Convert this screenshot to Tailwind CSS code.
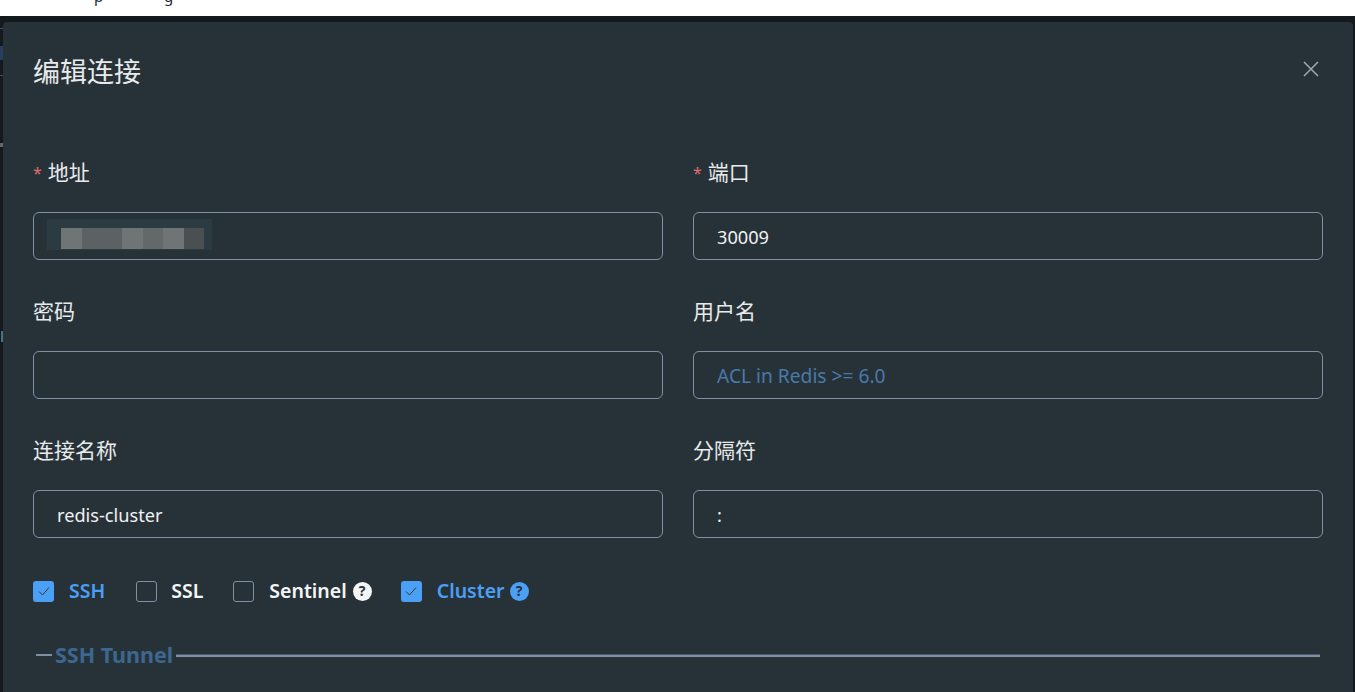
<!doctype html>
<html>
<head>
<meta charset="utf-8">
<script src="https://cdn.jsdelivr.net/npm/@tailwindcss/browser@4"></script>
</head>
<body class="relative w-[1355px] h-[692px] overflow-hidden bg-[#14191d] font-['Noto_Sans','Noto_Sans_CJK_SC',sans-serif]">
<div class="h-4 bg-white overflow-hidden relative text-[15px] leading-none text-[#1f2937]">
  <span class="absolute left-[94px] top-[-11px]">p</span>
  <span class="absolute left-[164px] top-[-11px]">g</span>
</div>
<div class="absolute left-0 top-[28px] w-[3px] h-px bg-[#4a5054]"></div>
<div class="absolute left-0 top-[46px] w-[3px] h-[14px] bg-[#24405e]"></div>
<div class="absolute left-0 top-[75px] w-[3px] h-px bg-[#4a5054]"></div>
<div class="absolute left-0 top-[143px] w-[3px] h-[4px] bg-[#6a6460]"></div>
<div class="absolute left-[1px] top-[331px] w-[2px] h-[11px] bg-[#4a7286]"></div>
<div class="h-[676px] pt-[6px] pl-[3px] pr-[2px]">
  <div class="h-[670px] bg-[#273238] rounded-t-[4px] pl-[30px] pr-[30px] overflow-hidden">
    <div class="h-[126px] flex items-start justify-between pt-[30px]">
      <h2 class="text-[27px] leading-[40px] text-[#e8eaeb] font-normal">编辑连接</h2>
      <svg class="mt-[9px] mr-[4px] w-[16px] h-[16px]" viewBox="0 0 16 16" fill="none" stroke="#a3a8ab" stroke-width="1.5"><path d="M1 1L15 15M15 1L1 15"/></svg>
    </div>
    <div class="grid grid-cols-2 gap-x-[30px] gap-y-[27px]">
      <div>
        <label class="flex items-center h-[50px] mb-[14px] text-[21px] text-[#e8eaeb]"><span class="text-[#e26d6d] mr-[6px] text-[16px]">*</span>地址</label>
        <div class="h-[48px] border border-[#7f90a5] rounded-[6px] relative">
          <div class="absolute left-[13px] top-[6px] w-[165px] h-[31px] bg-[#2c3a42] pt-[9px] pl-[14px]">
            <div class="flex h-[21px]">
              <div class="w-[21px] bg-[#6f7475]"></div>
              <div class="w-[40px] bg-[#5c6263]"></div>
              <div class="w-[21px] bg-[#6f7475]"></div>
              <div class="w-[20px] bg-[#636869]"></div>
              <div class="w-[21px] bg-[#707475]"></div>
              <div class="w-[20px] bg-[#4a4f51]"></div>
            </div>
          </div>
        </div>
      </div>
      <div>
        <label class="flex items-center h-[50px] mb-[14px] text-[21px] text-[#e8eaeb]"><span class="text-[#e26d6d] mr-[6px] text-[16px]">*</span>端口</label>
        <input class="block w-full h-[48px] border border-[#7f90a5] rounded-[6px] px-[23px] pt-[2px] text-[18.2px] text-[#f0f1f2] outline-none" value="30009">
      </div>
      <div>
        <label class="flex items-center h-[50px] mb-[14px] text-[21px] text-[#e8eaeb]">密码</label>
        <input class="block w-full h-[48px] border border-[#7f90a5] rounded-[6px] px-[23px] pt-[2px] text-[18.2px] text-[#f0f1f2] outline-none" value="">
      </div>
      <div>
        <label class="flex items-center h-[50px] mb-[14px] text-[21px] text-[#e8eaeb]">用户名</label>
        <input class="block w-full h-[48px] border border-[#7f90a5] rounded-[6px] px-[23px] text-[19.2px] text-[#f0f1f2] outline-none placeholder:text-[#477aa8] placeholder:opacity-100" placeholder="ACL in Redis &gt;= 6.0">
      </div>
      <div>
        <label class="flex items-center h-[50px] mb-[14px] text-[21px] text-[#e8eaeb]">连接名称</label>
        <input class="block w-full h-[48px] border border-[#7f90a5] rounded-[6px] px-[23px] pt-[2px] text-[18.2px] text-[#f0f1f2] outline-none" value="redis-cluster">
      </div>
      <div>
        <label class="flex items-center h-[50px] mb-[14px] text-[21px] text-[#e8eaeb]">分隔符</label>
        <input class="block w-full h-[48px] border border-[#7f90a5] rounded-[6px] px-[23px] pt-[2px] text-[18.2px] text-[#f0f1f2] outline-none" value=":">
      </div>
    </div>
    <div class="flex items-center h-[22px] mt-[42px] text-[19.5px] font-semibold">
      <span class="flex items-center text-[#4b9ff5]">
        <span class="w-[21px] h-[21px] rounded-[3px] bg-[#4b9ff5] flex items-center justify-center"><svg class="w-[14px] h-[14px]" viewBox="0 0 14 14" fill="none" stroke="#2b3a46" stroke-width="1"><path d="M2 7.5L5.5 11L12 3.5"/></svg></span>
        <span class="ml-[15px]">SSH</span>
      </span>
      <span class="flex items-center text-[#f4f5f6] ml-[31px]">
        <span class="w-[21px] h-[21px] rounded-[3px] border border-[#7f90a5]"></span>
        <span class="ml-[14px]">SSL</span>
      </span>
      <span class="flex items-center text-[#f4f5f6] ml-[30px]">
        <span class="w-[21px] h-[21px] rounded-[3px] border border-[#7f90a5]"></span>
        <span class="ml-[15px]">Sentinel</span>
        <span class="ml-[6px] w-[19px] h-[19px] rounded-full bg-[#f4f5f6] text-[#273238] text-[14px] leading-none font-bold flex items-center justify-center">?</span>
      </span>
      <span class="flex items-center text-[#4b9ff5] ml-[29px]">
        <span class="w-[21px] h-[21px] rounded-[3px] bg-[#4b9ff5] flex items-center justify-center"><svg class="w-[14px] h-[14px]" viewBox="0 0 14 14" fill="none" stroke="#2b3a46" stroke-width="1"><path d="M2 7.5L5.5 11L12 3.5"/></svg></span>
        <span class="ml-[15px]">Cluster</span>
        <span class="ml-[5px] w-[19px] h-[19px] rounded-full bg-[#4b9ff5] text-[#273238] text-[14px] leading-none font-bold flex items-center justify-center">?</span>
      </span>
    </div>
    <div class="flex items-center mt-[40px] ml-[3px] mr-[3px] h-[26px]">
      <div class="w-4 h-[2px] bg-[#7f90a5]"></div>
      <span class="text-[21.5px] font-bold text-[#3d6690] mx-[3px] leading-none">SSH Tunnel</span>
      <div class="flex-1 h-[3px] border-t border-[#4a5b6b] bg-[#7f90a5]"></div>
    </div>
  </div>
</div>
</body>
</html>
